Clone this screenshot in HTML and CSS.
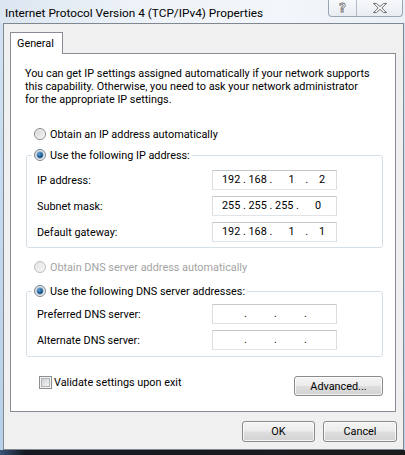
FILE: index.html
```html
<!DOCTYPE html>
<html>
<head>
<meta charset="utf-8">
<title>Internet Protocol Version 4 (TCP/IPv4) Properties</title>
<link rel="stylesheet" href="styles.css">
</head>
<body>
<svg class="defs" width="0" height="0" aria-hidden="true">
  <defs>
    <linearGradient id="rfill" x1="0" y1="0" x2="1" y2="1">
      <stop offset="0" stop-color="#d2d2d2"/>
      <stop offset="1" stop-color="#f8f8f8"/>
    </linearGradient>
    <linearGradient id="rfillDis" x1="0" y1="0" x2="1" y2="1">
      <stop offset="0" stop-color="#e2e2e2"/>
      <stop offset="1" stop-color="#f8f8f8"/>
    </linearGradient>
    <radialGradient id="rdot" cx="0.4" cy="0.35" r="0.7">
      <stop offset="0" stop-color="#5fa3d9"/>
      <stop offset="0.55" stop-color="#1b5e96"/>
      <stop offset="1" stop-color="#0b2a48"/>
    </radialGradient>
    <linearGradient id="cfill" x1="0" y1="0" x2="1" y2="1">
      <stop offset="0" stop-color="#cfcfcf"/>
      <stop offset="1" stop-color="#f6f6f6"/>
    </linearGradient>
  </defs>
</svg>
<div class="window">
  <div class="titlebar">
    <div class="title">Internet Protocol Version 4 (TCP/IPv4) Properties</div>
    <div class="caption-btns">
      <div class="cbtn help">?</div>
      <div class="cbtn close">
        <svg width="14" height="10" viewBox="0 0 14 10"><path d="M0.5 0.5H3.5L7 3.6L10.5 0.5H13.5L8.8 5L13.5 9.5H10.5L7 6.4L3.5 9.5H0.5L5.2 5Z" fill="#fbfbfb" stroke="#6e6e6e" stroke-width="1" stroke-linejoin="round"/></svg>
      </div>
    </div>
  </div>
  <div class="client">
    <div class="tabs"><div class="tab">General</div></div>
    <div class="panel">
      <p class="intro">You can get IP settings assigned automatically if your network supports<br>this capability. Otherwise, you need to ask your network administrator<br>for the appropriate IP settings.</p>

      <div class="radio-row first">
        <svg class="radio" viewBox="0 0 12 12"><circle cx="6" cy="6" r="5.5" fill="url(#rfill)" stroke="#8a8a8a"/><circle cx="6" cy="6" r="4.3" fill="none" stroke="#ffffff" stroke-opacity="0.5"/></svg>
        <span>Obtain an IP address automatically</span>
      </div>

      <fieldset class="group ipgroup">
        <legend>
          <svg class="radio" viewBox="0 0 12 12"><circle cx="6" cy="6" r="5.5" fill="url(#rfill)" stroke="#7d8793"/><circle cx="6" cy="6" r="3.4" fill="url(#rdot)" stroke="#d9ecfb" stroke-width="0.6"/></svg>
          <span>Use the following IP address:</span>
        </legend>
        <div class="field-row">
          <span class="lbl">IP address:</span>
          <div class="ipbox"><span class="ip">192 . 168 .      1    .    2</span></div>
        </div>
        <div class="field-row">
          <span class="lbl">Subnet mask:</span>
          <div class="ipbox"><span class="ip">255 . 255 . 255 .      0</span></div>
        </div>
        <div class="field-row">
          <span class="lbl">Default gateway:</span>
          <div class="ipbox"><span class="ip">192 . 168 .      1    .    1</span></div>
        </div>
      </fieldset>

      <div class="radio-row disabled">
        <svg class="radio" viewBox="0 0 12 12"><circle cx="6" cy="6" r="5.5" fill="url(#rfillDis)" stroke="#bdbdbd"/></svg>
        <span>Obtain DNS server address automatically</span>
      </div>

      <fieldset class="group dnsgroup">
        <legend>
          <svg class="radio" viewBox="0 0 12 12"><circle cx="6" cy="6" r="5.5" fill="url(#rfill)" stroke="#7d8793"/><circle cx="6" cy="6" r="3.4" fill="url(#rdot)" stroke="#d9ecfb" stroke-width="0.6"/></svg>
          <span>Use the following DNS server addresses:</span>
        </legend>
        <div class="field-row">
          <span class="lbl">Preferred DNS server:</span>
          <div class="ipbox empty"><span>.</span><span>.</span><span>.</span></div>
        </div>
        <div class="field-row">
          <span class="lbl">Alternate DNS server:</span>
          <div class="ipbox empty"><span>.</span><span>.</span><span>.</span></div>
        </div>
      </fieldset>

      <div class="bottom-row">
        <div class="check-row">
          <svg class="check" viewBox="0 0 13 13"><rect x="0.5" y="0.5" width="12" height="12" fill="#f4f4f4" stroke="#8e8f8f"/><rect x="2.5" y="2.5" width="8" height="8" fill="url(#cfill)" stroke="#aeb3b9" stroke-width="1"/></svg>
          <span>Validate settings upon exit</span>
        </div>
        <button class="btn adv">Advanced...</button>
      </div>
    </div>
    <div class="dialog-btns">
      <button class="btn ok">OK</button>
      <button class="btn cancel">Cancel</button>
    </div>
  </div>
  <div class="frame-bottom"></div>
</div>
</body>
</html>
```
FILE: styles.css
```css
* { box-sizing: border-box; }
html, body { margin: 0; padding: 0; }
body {
  width: 405px;
  height: 455px;
  overflow: hidden;
  font-family: Roboto, "Noto Sans", "Liberation Sans", sans-serif;
  font-size: 10.85px;
  color: #000;
  background: linear-gradient(180deg, #d3e3f3, #b7cfe8);
}
.defs { position: absolute; width: 0; height: 0; }

.window {
  height: 455px;
  display: flex;
  flex-direction: column;
}

/* title bar */
.titlebar {
  height: 23px;
  flex: 0 0 23px;
  display: flex;
  align-items: flex-start;
  padding-left: 5px;
  background: linear-gradient(90deg, #dce6f1 0%, #eef3f8 35%, #f3f6fa 70%, #eaf0f6 100%);
}
.title {
  font-size: 11.8px;
  line-height: 16px;
  padding-top: 5px;
  color: #000;
}
.caption-btns {
  margin-left: auto;
  margin-right: 2px;
  width: 75px;
  height: 17px;
  display: flex;
  border: 1px solid #9aa6b3;
  border-top: none;
  border-radius: 0 0 4px 4px;
  background: linear-gradient(180deg, #f7f9fb, #e8edf2);
}
.cbtn {
  display: flex;
  align-items: center;
  justify-content: center;
}
.cbtn.help {
  width: 28px;
  border-right: 1px solid #b2bcc6;
  font-family: "DejaVu Sans", sans-serif;
  font-weight: bold;
  font-size: 12px;
  line-height: 14px;
  color: #fbfbfb;
  -webkit-text-stroke: 0.8px #707070;
}
.cbtn.close { flex: 1; }

/* client area */
.client {
  flex: 0 0 427px;
  margin: 0 1px 0 3px;
  background: #f0f0f0;
  border: 1px solid #7f8891;
  display: flex;
  flex-direction: column;
}
.frame-bottom {
  flex: 1;
  background: linear-gradient(90deg, #3a5478 0%, #151a22 6%, #1b1b1b 100%);
}

.tabs {
  display: flex;
  padding: 8px 0 0 6px;
  margin-bottom: -1px;
  position: relative;
  z-index: 1;
}
.tab {
  width: 53px;
  height: 22px;
  border: 1px solid #898c95;
  border-bottom: none;
  background: #fff;
  padding-left: 6px;
  line-height: 21px;
}

.panel {
  margin: 0 7px 0 6px;
  height: 359px;
  background: #fff;
  border: 1px solid #898c95;
  padding: 13px 12px 0 15px;
  display: flex;
  flex-direction: column;
}
.intro {
  margin: 0 0 0 -1px;
  line-height: 13px;
}

.radio-row {
  display: flex;
  align-items: center;
  gap: 4px;
  height: 14px;
  margin-left: 8px;
}
.radio-row.first { margin-top: 21px; }
.radio-row.disabled { margin-top: 12px; color: #a3a3a3; }
.radio { width: 12px; height: 12px; flex: 0 0 12px; }

.group {
  margin: 7px 0 0 0;
  padding: 0 10px 5px 10px;
  border: 1px solid #d5dfe5;
  border-radius: 3px;
  min-width: 0;
}
.dnsgroup { margin-top: 10px; padding-bottom: 6px; }
.group legend {
  display: flex;
  align-items: center;
  gap: 4px;
  height: 14px;
  margin-left: -5px;
  padding: 0 2px 0 2px;
}

.field-row {
  display: flex;
  align-items: center;
  height: 20px;
  margin-top: 6px;
}
.ipgroup .field-row:first-of-type { margin-top: 8px; }
.dnsgroup .field-row:first-of-type { margin-top: 6px; }
.lbl { width: 175px; flex: 0 0 175px; }
.ipbox {
  width: 125px;
  height: 20px;
  border: 1px solid;
  border-color: #c4c8cd #dadde1 #e0e3e7 #dadde1;
  background: #fff;
  line-height: 18px;
  padding-left: 9px;
}
.ip { white-space: pre; }
.ipbox.empty {
  display: flex;
  gap: 27px;
  padding-left: 31px;
}
.ipbox.empty span { width: 3px; }

.bottom-row {
  display: flex;
  align-items: flex-start;
  margin-top: 18px;
}
.check-row {
  display: flex;
  align-items: center;
  gap: 2px;
  height: 14px;
  margin-left: 13px;
}
.check { width: 13px; height: 13px; flex: 0 0 13px; }

.btn {
  font-family: inherit;
  font-size: 10.85px;
  color: #000;
  height: 21px;
  padding: 0;
  border: 1px solid #8a8a8a;
  border-radius: 3px;
  background: linear-gradient(180deg, #f4f4f4 0%, #ececec 48%, #dedede 52%, #d2d2d2 100%);
  box-shadow: inset 0 0 0 1px rgba(255,255,255,0.75);
}
.btn.adv {
  margin-left: auto;
  margin-top: 1px;
  width: 89px;
  height: 20px;
}
.dialog-btns {
  display: flex;
  justify-content: flex-end;
  gap: 8px;
  margin-top: 9px;
  padding-right: 6px;
}
.btn.ok { width: 73px; }
.btn.cancel { width: 74px; }
```
